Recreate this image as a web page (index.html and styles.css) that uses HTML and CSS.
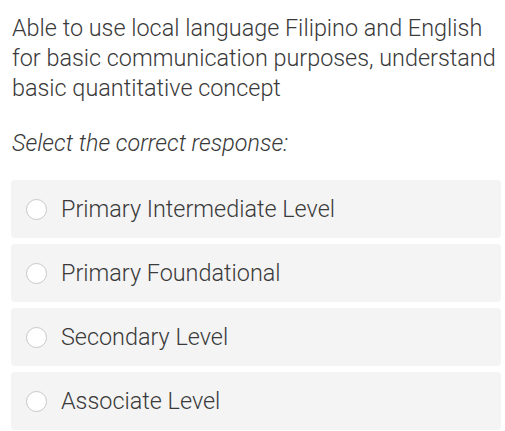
FILE: index.html
```html
<!DOCTYPE html>
<html>
<head>
<meta charset="utf-8">
<link rel="stylesheet" href="styles.css">
</head>
<body>
<div class="question">
  <p class="prompt">Able to use local language Filipino and English for basic communication purposes, understand basic quantitative concept</p>
  <p class="instruction">Select the correct response:</p>
  <div class="options">
    <label class="option"><span class="radio"></span><span class="label">Primary Intermediate Level</span></label>
    <label class="option"><span class="radio"></span><span class="label">Primary Foundational</span></label>
    <label class="option"><span class="radio"></span><span class="label">Secondary Level</span></label>
    <label class="option"><span class="radio"></span><span class="label">Associate Level</span></label>
  </div>
</div>
</body>
</html>
```
FILE: styles.css
```css
html, body {
  margin: 0;
  padding: 0;
  background: #fff;
}
body {
  font-family: "Roboto Light", Roboto, "Liberation Sans", sans-serif;
  font-weight: 300;
  color: #3a3a3a;
}
.question {
  padding: 13px 4px 0 11px;
}
.prompt {
  margin: 0 0 0 1px;
  font-size: 23.4px;
  line-height: 30px;
}
.instruction {
  margin: 25px 0 22px 1px;
  font-size: 23.4px;
  line-height: 30px;
  font-style: italic;
}
.options {
  display: flex;
  flex-direction: column;
  gap: 6px;
}
.option {
  display: flex;
  align-items: center;
  height: 58px;
  background: #f4f4f4;
  border-radius: 4px;
  padding-left: 15px;
}
.radio {
  width: 19px;
  height: 19px;
  border: 1px solid #c8c8c8;
  border-radius: 50%;
  background: #fff;
  margin-right: 14px;
  flex: none;
}
.label {
  font-size: 23.4px;
}
```
